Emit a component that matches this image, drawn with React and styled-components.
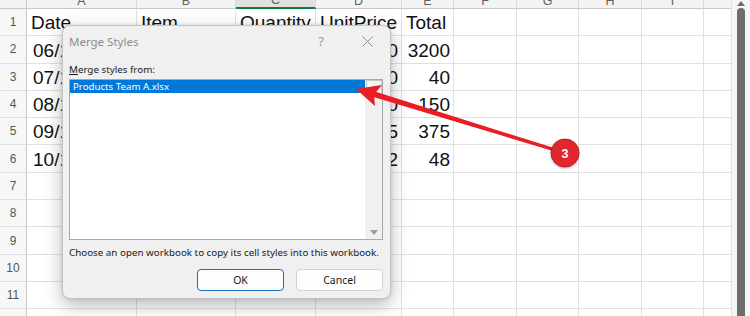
import React from 'react';
import styled, { createGlobalStyle } from 'styled-components';

const GlobalStyle = createGlobalStyle`
    html, body {
        margin: 0;
        padding: 0;
        background: #ffffff;
        overflow: hidden;
    }
`;

const COLS = [
    { key: 'A', width: 110 },
    { key: 'B', width: 99 },
    { key: 'C', width: 80 },
    { key: 'D', width: 86 },
    { key: 'E', width: 52 },
    { key: 'F', width: 63 },
    { key: 'G', width: 62 },
    { key: 'H', width: 63 },
    { key: 'I', width: 62 },
    { key: 'J', width: 62 },
];

const ROWS = [
    ['Date', 'Item', 'Quantity', 'UnitPrice', 'Total'],
    ['06/12/2024', 'Laptop', '4', '800', '3200'],
    ['07/12/2024', 'Mouse', '2', '20', '40'],
    ['08/12/2024', 'Keyboard', '3', '50', '150'],
    ['09/12/2024', 'Monitor', '5', '75', '375'],
    ['10/12/2024', 'Cable', '4', '12', '48'],
];

const TOTAL_ROWS = 12;

const Page = styled.div`
    position: relative;
    width: 750px;
    height: 316px;
    overflow: hidden;
    display: flex;
    background: #ffffff;
`;

const SheetArea = styled.div`
    flex: 1;
    overflow: hidden;
`;

const Grid = styled.div`
    margin-top: -11px;
    display: grid;
    grid-template-columns: 27px ${COLS.map((c) => `${c.width}px`).join(' ')};
    grid-template-rows: 20px repeat(${TOTAL_ROWS}, 27.3px);
`;

const Corner = styled.div`
    background: #f3f3f3;
    border-right: 1px solid #c9c9c9;
    border-bottom: 1px solid #c9c9c9;
`;

const ColHeader = styled.div`
    box-sizing: border-box;
    background: ${(p) => (p.$active ? '#e1e1e1' : '#f3f3f3')};
    border-right: 1px solid #dadada;
    border-bottom: ${(p) => (p.$active ? '2px solid #107c41' : '1px solid #c9c9c9')};
    font-family: 'Liberation Sans', Arial, sans-serif;
    font-size: 12.5px;
    color: #616161;
    display: flex;
    align-items: center;
    justify-content: center;
    padding-top: 4px;
`;

const RowNum = styled.div`
    box-sizing: border-box;
    background: #f7f7f7;
    border-right: 1px solid #c9c9c9;
    border-bottom: 1px solid #e1e1e1;
    font-family: 'Liberation Sans', Arial, sans-serif;
    font-size: 12px;
    color: #555555;
    display: flex;
    align-items: center;
    justify-content: center;
`;

const Cell = styled.div`
    box-sizing: border-box;
    border-right: 1px solid #e1e1e1;
    border-bottom: 1px solid #e1e1e1;
    font-family: 'Liberation Sans', Arial, sans-serif;
    font-size: 19px;
    line-height: 1;
    color: #111111;
    white-space: nowrap;
    display: flex;
    align-items: flex-end;
    justify-content: ${(p) => (p.$right ? 'flex-end' : 'flex-start')};
    padding: 0 3px 3px ${(p) => (p.$indent ? '6px' : '4px')};
`;

const VScroll = styled.div`
    width: 18px;
    flex-shrink: 0;
    background: #f6f6f6;
    border-left: 1px solid #e3e3e3;
    display: flex;
    flex-direction: column;
    align-items: center;
    padding-top: 1px;
    gap: 2px;
`;

const ScrollThumb = styled.div`
    flex: 1;
    width: 8px;
    background: #6d6d6d;
    border-radius: 4px 4px 0 0;
`;

const Dialog = styled.div`
    position: absolute;
    left: 62px;
    top: 25px;
    width: 329px;
    height: 274px;
    box-sizing: border-box;
    background: #f0f0f0;
    border: 1px solid #c4c4c4;
    border-radius: 8px;
    box-shadow: 0 6px 18px rgba(0, 0, 0, 0.28), 0 0 3px rgba(0, 0, 0, 0.12);
    display: flex;
    flex-direction: column;
    font-family: 'Noto Sans', 'Open Sans', sans-serif;
`;

const TitleBar = styled.div`
    height: 30px;
    display: flex;
    align-items: center;
    padding-left: 6px;
`;

const Title = styled.span`
    flex: 1;
    font-size: 11.5px;
    color: #8d8d8d;
`;

const TitleButton = styled.div`
    width: 46px;
    height: 30px;
    display: flex;
    align-items: center;
    justify-content: center;
    color: #9a9a9a;
    font-size: 13px;
`;

const Body = styled.div`
    flex: 1;
    display: flex;
    flex-direction: column;
    padding: 7px 7px 7px 6px;
`;

const Label = styled.div`
    font-size: 9.8px;
    color: #1a1a1a;
    line-height: 13px;
    margin-bottom: 3px;

    u {
        text-decoration-thickness: 1px;
        text-underline-offset: 1px;
    }
`;

const ListBox = styled.div`
    height: 161px;
    box-sizing: border-box;
    background: #ffffff;
    border: 1px solid #a8a8a8;
    display: flex;
`;

const ListItems = styled.div`
    flex: 1;
`;

const ListItem = styled.div`
    height: 13px;
    display: flex;
    align-items: center;
    padding-left: 3px;
    font-size: 9.7px;
    color: ${(p) => (p.$selected ? '#ffffff' : '#1a1a1a')};
    background: ${(p) => (p.$selected ? '#0078d7' : 'transparent')};
`;

const ListScroll = styled.div`
    width: 17px;
    background: #f0f0f0;
    display: flex;
    flex-direction: column;
    justify-content: space-between;
    align-items: center;
    padding-bottom: 4px;
`;

const ScrollBtn = styled.div`
    width: 16px;
    height: 16px;
    box-sizing: border-box;
    border: 1px solid #c9c9c9;
    background: #f5f5f5;
    display: flex;
    align-items: center;
    justify-content: center;
`;

const Help = styled.div`
    margin-top: 6px;
    font-size: 9.8px;
    line-height: 13px;
    color: #1a1a1a;
    white-space: nowrap;
`;

const ButtonRow = styled.div`
    margin-top: auto;
    display: flex;
    justify-content: flex-end;
    gap: 12px;
`;

const Button = styled.div`
    width: 87px;
    height: 22px;
    box-sizing: border-box;
    background: #fdfdfd;
    border: 1px solid ${(p) => (p.$primary ? '#1b6fc0' : '#d2d2d2')};
    border-radius: 4px;
    display: flex;
    align-items: center;
    justify-content: center;
    font-size: 10.5px;
    color: #1a1a1a;
`;

const Overlay = styled.svg`
    position: absolute;
    left: 0;
    top: 0;
    pointer-events: none;
`;

const Triangle = ({ up, color }) => (
    <svg width="8" height="5" viewBox="0 0 8 5">
        <polygon points={up ? '0,5 8,5 4,0' : '0,0 8,0 4,5'} fill={color} />
    </svg>
);

const App = () => {
    return (
        <>
            <GlobalStyle />
            <Page>
                <SheetArea>
                    <Grid>
                        <Corner />
                        {COLS.map((c) => (
                            <ColHeader key={c.key} $active={c.key === 'C'}>
                                {c.key}
                            </ColHeader>
                        ))}
                        {Array.from({ length: TOTAL_ROWS }).map((_, r) => (
                            <React.Fragment key={r}>
                                <RowNum>{r + 1}</RowNum>
                                {COLS.map((c, ci) => {
                                    const value = ROWS[r] ? ROWS[r][ci] : '';
                                    const numeric = r > 0 && ci >= 2;
                                    const isDate = r > 0 && ci === 0;
                                    return (
                                        <Cell key={c.key} $right={numeric} $indent={isDate}>
                                            {value}
                                        </Cell>
                                    );
                                })}
                            </React.Fragment>
                        ))}
                    </Grid>
                </SheetArea>
                <VScroll>
                    <Triangle up color="#6d6d6d" />
                    <ScrollThumb />
                </VScroll>

                <Dialog>
                    <TitleBar>
                        <Title>Merge Styles</Title>
                        <TitleButton>?</TitleButton>
                        <TitleButton>
                            <svg width="11" height="11" viewBox="0 0 11 11">
                                <path d="M0.5 0.5 L10.5 10.5 M10.5 0.5 L0.5 10.5" stroke="#8f8f8f" strokeWidth="1" />
                            </svg>
                        </TitleButton>
                    </TitleBar>
                    <Body>
                        <Label>
                            <u>M</u>erge styles from:
                        </Label>
                        <ListBox>
                            <ListItems>
                                <ListItem $selected>Products Team A.xlsx</ListItem>
                            </ListItems>
                            <ListScroll>
                                <ScrollBtn>
                                    <Triangle up color="#d0d0d0" />
                                </ScrollBtn>
                                <Triangle color="#9d9d9d" />
                            </ListScroll>
                        </ListBox>
                        <Help>Choose an open workbook to copy its cell styles into this workbook.</Help>
                        <ButtonRow>
                            <Button $primary>OK</Button>
                            <Button>Cancel</Button>
                        </ButtonRow>
                    </Body>
                </Dialog>

                <Overlay width="750" height="316" viewBox="0 0 750 316">
                    <defs>
                        <filter id="badgeShadow" x="-50%" y="-50%" width="200%" height="200%">
                            <feDropShadow dx="0" dy="1" stdDeviation="1.2" floodColor="#000" floodOpacity="0.3" />
                        </filter>
                    </defs>
                    <polygon
                        points="373.5,97 374.9,91.6 565.4,151.6 564.6,154.4"
                        fill="#ea1c24"
                    />
                    <polygon
                        points="356,89 382,85 374,94.5 375,106"
                        fill="#ea1c24"
                    />
                    <circle cx="565" cy="153" r="14" fill="#e2282f" stroke="#b81d23" strokeWidth="1" filter="url(#badgeShadow)" />
                    <text
                        x="565"
                        y="157.5"
                        textAnchor="middle"
                        fontFamily="'Liberation Sans', Arial, sans-serif"
                        fontWeight="bold"
                        fontSize="12.5"
                        fill="#ffffff"
                    >
                        3
                    </text>
                </Overlay>
            </Page>
        </>
    );
};

export default App;
